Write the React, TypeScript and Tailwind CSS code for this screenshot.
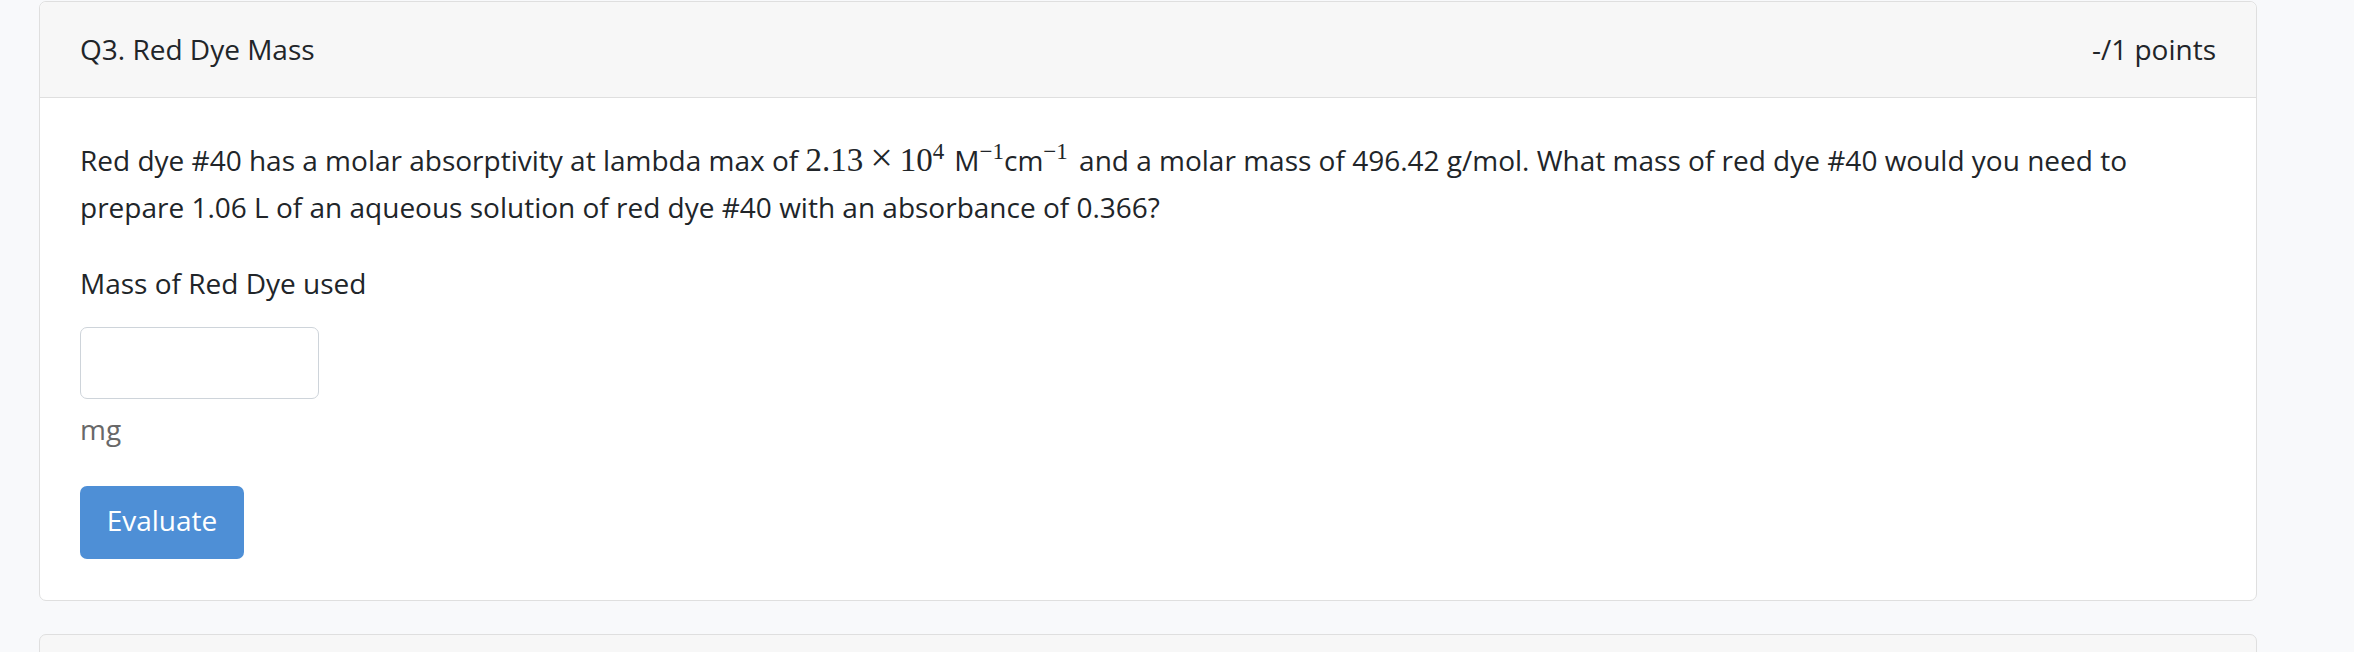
import React from 'react'

// Question card, as rendered by the course page
function Sup({ children }: { children: React.ReactNode }) {
  return (
    <sup className="-top-[12px] font-['Liberation_Serif','DejaVu_Serif',serif] text-[23px] leading-none">
      {children}
    </sup>
  )
}

function Formula() {
  return (
    <span>
      <span className="font-['Liberation_Serif','DejaVu_Serif',serif] text-[33px]">
        2.13<span className="mx-[7px] text-[40px] leading-none">×</span>10
      </span>
      <Sup>4</Sup>
      <span className="ml-[10px]">M</span>
      <Sup>−1</Sup>
      <span>cm</span>
      <Sup>−1</Sup>
      <span className="ml-[4px]" />
    </span>
  )
}

export default function App() {
  return (
    <div className="h-[652px] overflow-hidden bg-[#f8f9fb] pt-px font-['Open_Sans','Liberation_Sans',sans-serif] text-[28px] leading-[43px] text-[#212529]">
      <div className="ml-[39px] w-[2218px] rounded-[7px] border border-[#dfdfdf] bg-white">
        <div className="flex items-center justify-between rounded-t-[7px] border-b border-[#dfdfdf] bg-[#f7f7f7] px-[40px] py-[26px]">
          <span>Q3. Red Dye Mass</span>
          <span>-/1 points</span>
        </div>

        <div className="px-[40px] pt-[39px] pb-[41px]">
          <p className="leading-[47px]">
            Red dye #40 has a molar absorptivity at lambda max of <Formula /> and a molar mass of 496.42 g/mol. What
            mass of red dye #40 would you need to
            <br />
            prepare 1.06 L of an aqueous solution of red dye #40 with an absorbance of 0.366?
          </p>

          <div className="mt-[31px]">Mass of Red Dye used</div>

          <input
            type="text"
            className="mt-[22px] block h-[72px] w-[239px] rounded-[7px] border border-[#ced4da] bg-white px-[18px] outline-none"
          />

          <div className="mt-[9px] text-[#686868]">mg</div>

          <button
            type="button"
            className="mt-[35px] flex h-[73px] w-[164px] items-center justify-center rounded-[7px] bg-[#4e8fd6] pb-[4px] text-white"
          >
            Evaluate
          </button>
        </div>
      </div>

      {/* next question, cut off by the window */}
      <div className="mt-[33px] ml-[39px] h-[60px] w-[2218px] rounded-t-[7px] border border-[#dfdfdf] bg-[#f7f7f7]" />
    </div>
  )
}
